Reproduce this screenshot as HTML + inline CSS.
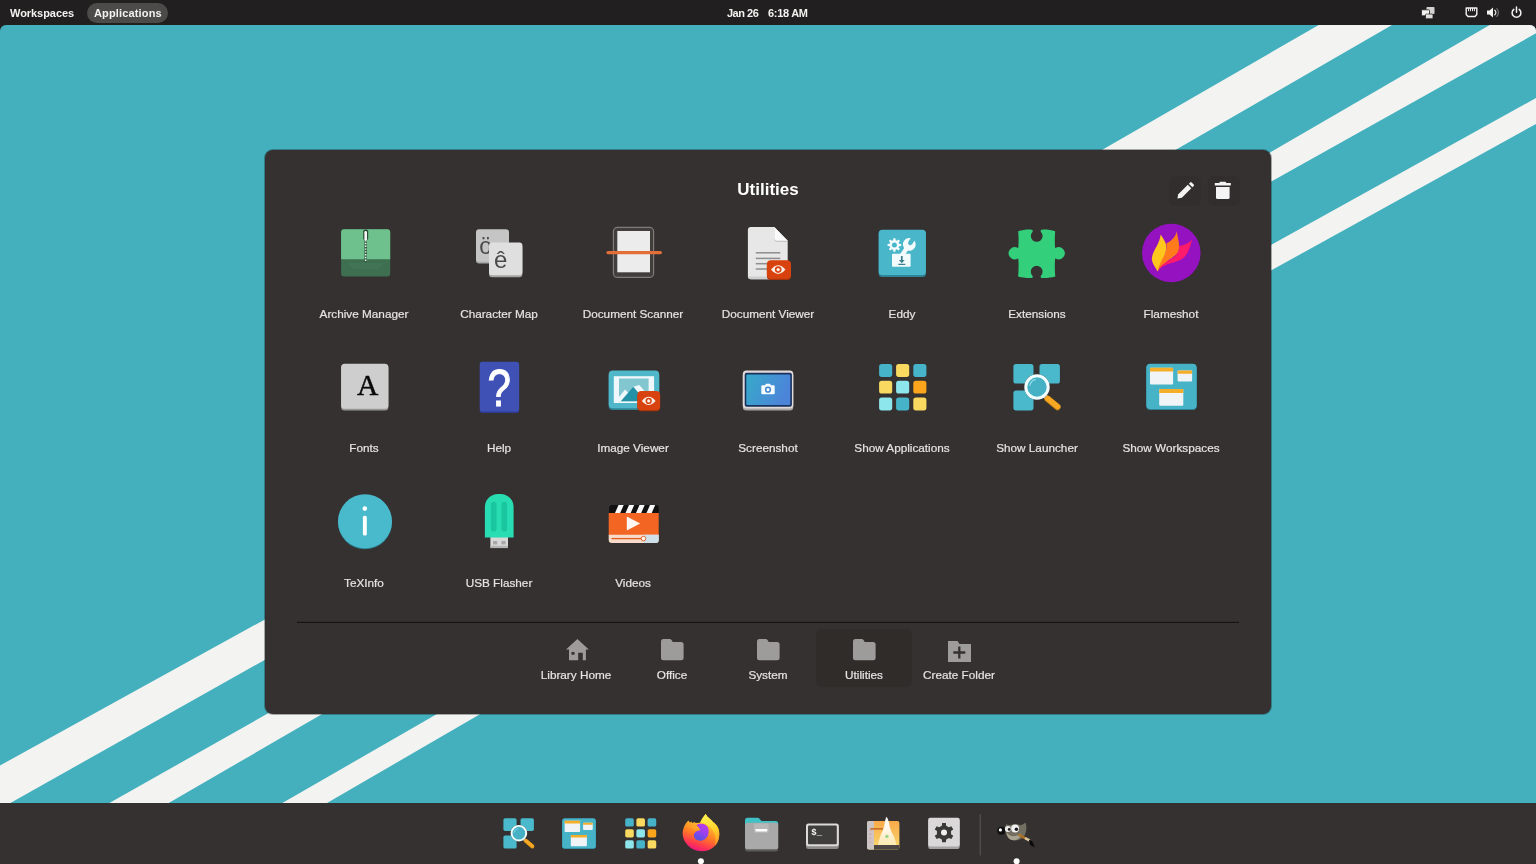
<!DOCTYPE html>
<html lang="en"><head><meta charset="utf-8"><title>Utilities</title>
<style>
*{margin:0;padding:0;box-sizing:border-box}
html,body{width:1536px;height:864px;overflow:hidden;background:#211f1f;font-family:"Liberation Sans",sans-serif}
svg{display:block;overflow:visible}
.lb,#title,#topbar span,.ic,svg.abs{will-change:transform}
#wall{position:absolute;left:0;top:25px;width:1536px;height:778px;border-radius:6px 6px 0 0;overflow:hidden;background:#44b0be}
#wall svg{position:absolute;left:0;top:-25px}
#topbar{position:absolute;left:0;top:0;width:1536px;height:25px;color:#f3f2f1;font-weight:bold;font-size:11px}
#topbar span{position:absolute;top:0;line-height:26px;white-space:nowrap}
#pill{position:absolute;left:87px;top:3px;width:81px;height:20px;border-radius:10px;background:#4d4b4a}
#topbar svg{position:absolute}
#win{position:absolute;left:265px;top:150px;width:1006px;height:564px;border-radius:8px;background:#353130;box-shadow:0 0 0 1px rgba(20,30,32,.35)}
#title{position:absolute;left:0;width:1006px;top:28px;text-align:center;color:#fff;font-weight:bold;font-size:17px;line-height:22px}
.ic{position:absolute;width:80px;height:80px}
.lb{position:absolute;width:180px;text-align:center;color:#e6e4e2;font-size:11.75px;line-height:16px;white-space:nowrap;-webkit-text-stroke:0.2px #e6e4e2}
#sep{position:absolute;left:297px;top:622px;width:942px;height:1px;background:#161412;box-shadow:0 -1px 0 rgba(0,0,0,.12)}
.tab{position:absolute;left:816px;top:629px;width:96px;height:58px;border-radius:5px;background:#2f2c2a}
.hb{position:absolute;top:176px;width:32px;height:30px;border-radius:6px;background:#312e2d}
#dock{position:absolute;left:0;top:803px;width:1536px;height:61px;background:#353130}
.dot{position:absolute;width:6px;height:6px;border-radius:50%;background:#fff}
.abs{position:absolute}
</style></head><body>
<div id="wall"><svg width="1536" height="864" viewBox="0 0 1536 864" fill="#f3f3f1">
<polygon points="-20,776.5 420,533.9 420,572.5 -20,820.1"/>
<polygon points="60,830.9 520,571.1 520,599.4 60,866"/>
<polygon points="240,827.4 640,597.1 640,621.4 240,853.5"/>
<polygon points="1000,208.8 1450,-50.7 1450,-8.5 1000,251.3"/>
<polygon points="1120,239.7 1560,-15.8 1560,19.9 1120,266.3"/>
<polygon points="1120,328.8 1560,84.7 1560,110.7 1120,354"/>
</svg></div>

<div id="topbar"><span style="left:9.5px;letter-spacing:-0.05px">Workspaces</span><div id="pill"></div><span style="left:93.7px;letter-spacing:0.15px">Applications</span><span style="left:727px;letter-spacing:-0.5px">Jan 26</span><span style="left:767.5px;letter-spacing:-0.3px">6:18 AM</span>
<svg style="left:1420px;top:6px" width="16" height="14" viewBox="0 0 16 14" fill="#f3f2f1"><rect x="6.5" y="1" width="8" height="7" rx="0.8" opacity=".85"/><rect x="1.5" y="3.8" width="8" height="6" rx="0.8" stroke="#211f1f" stroke-width="0.8"/><rect x="5.5" y="8" width="7.5" height="4.8" rx="0.8" stroke="#211f1f" stroke-width="0.8" opacity=".9"/></svg>
<svg style="left:1465px;top:7px" width="13" height="11" viewBox="0 0 13 11" fill="none" stroke="#f3f2f1"><path d="M1.2,1 H11.8 V7.5 L10,9.5 H3 L1.2,7.5z" stroke-width="1.4" stroke-linejoin="round"/><path d="M3.6,1v3.2M5.5,1v3.2M7.5,1v3.2M9.4,1v3.2" stroke-width="1"/></svg>
<svg style="left:1486px;top:7px" width="14" height="11" viewBox="0 0 14 11" fill="#f3f2f1"><path d="M1,3.6H3.5L7,0.6V10.4L3.5,7.4H1z"/><path d="M8.8,3.2a3,3 0 0 1 0,4.6" fill="none" stroke="#f3f2f1" stroke-width="1.2" stroke-linecap="round"/><path d="M10.8,1.6a5.5,5.5 0 0 1 0,7.8" fill="none" stroke="#f3f2f1" stroke-width="1.1" stroke-linecap="round" opacity=".45"/></svg>
<svg style="left:1510px;top:6px" width="13" height="13" viewBox="0 0 13 13" fill="none" stroke="#f3f2f1" stroke-width="1.5" stroke-linecap="round"><path d="M3.8,3.4a4.4,4.4 0 1 0 5.4,0"/><path d="M6.5,1v5.2"/></svg>
</div>
<div id="win"></div>
<div id="title" style="left:265px;top:179px">Utilities</div>
<div class="hb" style="left:1169px"></div><div class="hb" style="left:1208px"></div>
<svg class="abs" style="left:1176px;top:182px" width="20" height="18" viewBox="0 0 20 18" fill="#f4f4f4"><path d="M1.4,16.6 L2.3,12.2 L11.8,2.7 L15.3,6.2 L5.8,15.7z"/><path d="M12.9,1.7 L14.2,0.4 a1,1 0 0 1 1.4,0 L17.7,2.5 a1,1 0 0 1 0,1.4 L16.4,5.2z"/></svg>
<svg class="abs" style="left:1214px;top:181px" width="18" height="19" viewBox="0 0 18 19" fill="#f4f4f4"><path d="M6,0.8h5.5l0.8,1.3H16.8V4.6H0.8V2.1H5.2z"/><path d="M2,6H15.6V16.5a1.5,1.5 0 0 1 -1.5,1.5H3.5a1.5,1.5 0 0 1 -1.5,-1.5z"/></svg>
<svg class="ic" style="left:324px;top:213px" viewBox="0 0 80 80"><rect x="17.1" y="16.2" width="49.1" height="47.2" rx="3" fill="#3e6f51"/>
<path d="M17.1,46.3V19.2a3,3 0 0 1 3,-3H63.2a3,3 0 0 1 3,3V46.3z" fill="#6ec18c"/>
<path d="M24,50 H59.5 L54,56 H29.5z" fill="#457a59" opacity=".6"/>
<line x1="41.7" y1="17" x2="41.7" y2="49" stroke="#2f5a41" stroke-width="2.6"/>
<line x1="41.7" y1="27" x2="41.7" y2="49" stroke="#e8f4ec" stroke-width="1.6" stroke-dasharray="1.4 1.4"/>
<rect x="39.2" y="16.6" width="5" height="10.6" rx="2" fill="#2c4a39"/>
<rect x="40.4" y="18" width="2.6" height="9.5" rx="1.2" fill="#f6f6f6"/></svg>
<div class="lb" style="left:274.2px;top:305.7px">Archive Manager</div>
<svg class="ic" style="left:458px;top:213px" viewBox="0 0 80 80"><rect x="18" y="18" width="33" height="32.4" rx="3.2" fill="#a9a9a9"/>
<rect x="18" y="16.2" width="33" height="32.6" rx="3.2" fill="#c5c5c5"/>
<text x="27.6" y="40.7" font-family="Liberation Sans, sans-serif" font-size="23" text-anchor="middle" fill="#4a4a4a">ö</text>
<rect x="31" y="31.6" width="33.4" height="32.6" rx="3.2" fill="#a5a5a5"/>
<rect x="31" y="29.6" width="33.4" height="32.6" rx="3.2" fill="#dfdfdf"/>
<text x="42.6" y="54.6" font-family="Liberation Sans, sans-serif" font-size="24" text-anchor="middle" fill="#4a4a4a">ê</text></svg>
<div class="lb" style="left:408.7px;top:305.7px">Character Map</div>
<svg class="ic" style="left:593px;top:213px" viewBox="0 0 80 80"><rect x="20.4" y="14.4" width="40.2" height="50" rx="4" fill="#413e3c" stroke="#7f7b79" stroke-width="1.2"/>
<rect x="24.3" y="18" width="32.7" height="41.3" fill="#ececec"/>
<rect x="13.4" y="38" width="55.6" height="3.2" rx="1.6" fill="#e36f38"/></svg>
<div class="lb" style="left:543.2px;top:305.7px">Document Scanner</div>
<svg class="ic" style="left:728px;top:213px" viewBox="0 0 80 80"><path d="M22.9,13.9H46.3L59.7,27.8V63.2a3,3 0 0 1 -3,3H22.9a3,3 0 0 1 -3,-3V16.9a3,3 0 0 1 3,-3z" fill="#e7e7e7"/>
<path d="M19.9,63.5a3,3 0 0 0 3,2.7H56.7a3,3 0 0 0 3,-2.7z" fill="#cfcfcf"/>
<path d="M46.3,14.9V25.8a3,3 0 0 0 3,3H59.7z" fill="#bdbdbd"/>
<path d="M46.3,13.9V24.8a3,3 0 0 0 3,3H59.7z" fill="#fafafa"/>
<g stroke="#8e8e8e" stroke-width="1.5"><line x1="27.8" y1="39.8" x2="52.3" y2="39.8"/><line x1="27.8" y1="45.4" x2="52.3" y2="45.4"/><line x1="27.8" y1="50.7" x2="52.3" y2="50.7"/><line x1="27.8" y1="56" x2="52.3" y2="56"/></g>
<rect x="38.9" y="48.4" width="24.1" height="18.6" rx="4" fill="#a9340b"/>
<rect x="38.9" y="47.2" width="24.1" height="18.6" rx="4" fill="#d8420e"/><path d="M43,56.6 Q50.2,48 57.4,56.6 Q50.2,65.2 43,56.6 Z" fill="#fbeee6"/><circle cx="50.2" cy="56.6" r="3.3" fill="#d8420e"/><circle cx="50.2" cy="56.6" r="1.7" fill="#fbeee6"/></svg>
<div class="lb" style="left:677.7px;top:305.7px">Document Viewer</div>
<svg class="ic" style="left:862px;top:213px" viewBox="0 0 80 80"><rect x="16.7" y="18" width="47.2" height="46" rx="3.5" fill="#2f8497"/>
<rect x="16.7" y="16.7" width="47.2" height="45.3" rx="3.5" fill="#49b6ca"/><path d="M39.22,30.92 L39.22,33.08 L37.15,33.19 L36.6,34.52 L37.98,36.06 L36.46,37.58 L34.92,36.2 L33.59,36.75 L33.48,38.82 L31.32,38.82 L31.21,36.75 L29.88,36.2 L28.34,37.58 L26.82,36.06 L28.2,34.52 L27.65,33.19 L25.58,33.08 L25.58,30.92 L27.65,30.81 L28.2,29.48 L26.82,27.94 L28.34,26.42 L29.88,27.8 L31.21,27.25 L31.32,25.18 L33.48,25.18 L33.59,27.25 L34.92,27.8 L36.46,26.42 L37.98,27.94 L36.6,29.48 L37.15,30.81Z" fill="#f4fbfc"/><circle cx="32.4" cy="32" r="2.5" fill="#49b6ca"/>
<g transform="translate(47.3 31.4) rotate(34)"><circle r="6.4" fill="#f4fbfc"/><path d="M-2.3,-7.5h4.6v5.6a2.3,2.3 0 0 1 -4.6,0z" fill="#49b6ca"/><rect x="-2.2" y="4" width="4.4" height="9" fill="#f4fbfc"/></g>
<rect x="30" y="40.7" width="18.6" height="13" rx="1" fill="#f4fbfc"/>
<path d="M38.9,43v4h-2l2.9,3.2l2.9,-3.2h-2v-4z M36.3,50.8h7v1.2h-7z" fill="#3f7f8e"/></svg>
<div class="lb" style="left:812.2px;top:305.7px">Eddy</div>
<svg class="ic" style="left:996px;top:213px" viewBox="0 0 80 80"><path d="M22.2,18.2 C26.5,16.9 31.5,16.4 35.6,16.7 C36.9,16.9 37.1,17.9 36.4,18.9 A5.9,5.9 0 1 0 45,18.9 C44.3,17.9 44.5,16.9 45.8,16.7 C50,16.4 55,16.9 59.2,18.2 C58.7,23.5 58.7,29 59,33.5 C59.1,35 59.6,35.6 59.4,35.1 A6.1,6.1 0 1 1 59.4,45.5 C59.6,45 59.1,45.6 59,47.1 C58.7,51.6 58.7,58 59.3,63.5 C55,64.7 50,65.2 45.8,64.9 C44.5,64.7 44.3,63.7 45,62.7 A5.9,5.9 0 1 0 36.4,62.7 C37.1,63.7 36.9,64.7 35.6,64.9 C31.5,65.2 26.5,64.7 22.1,63.5 C22.7,58 22.7,51.6 22.4,47.1 C22.3,45.6 21.8,45 22,45.5 A6.1,6.1 0 1 1 22,35.1 C21.8,35.6 22.3,35 22.4,33.5 C22.7,29 22.7,23.5 22.2,18.2z" fill="#34cf7b"/></svg>
<div class="lb" style="left:946.7px;top:305.7px">Extensions</div>
<svg class="ic" style="left:1131px;top:213px" viewBox="0 0 80 80"><circle cx="40.3" cy="40" r="29.3" fill="#9412bf"/>
<g transform="translate(40.5 39.5) scale(1.09) translate(-40.5 -39.5)">
<path d="M59.3,27.8C58,33 56.5,39 52.5,43.5C46.5,50 34,48 27.8,57C30,50.5 36,47.5 41,45C45,42.5 47.5,38.5 47.5,33.5C52,33 56.5,31 59.3,27.8z" fill="#ff1b6b"/>
<path d="M45.4,19.9C46,26 48.5,31 47,37.5C45,45 32,47 27.8,57C28.5,50 30,46.5 33.5,42C35.5,39 36.5,35 35.8,31C40,29 44,25.5 45.4,19.9z" fill="#ff7b1c"/>
<path d="M30.5,23.1C33,27 36.5,31 35.6,37C34.5,43 30,47 27.8,57C25,52 21.5,48 22.7,43.5C24,37 30,31 30.5,23.1z" fill="#ffc61e"/></g></svg>
<div class="lb" style="left:1081.2px;top:305.7px">Flameshot</div>
<svg class="ic" style="left:324px;top:347px" viewBox="0 0 80 80"><rect x="17.1" y="18" width="47.3" height="45.5" rx="3.5" fill="#9a9897"/>
<rect x="17.1" y="16.7" width="47.3" height="45" rx="3.5" fill="#cecece"/>
<text x="43.6" y="47.7" font-family="Liberation Serif, serif" font-size="29.5" text-anchor="middle" fill="#0a0a0a" stroke="#0a0a0a" stroke-width="0.5">A</text></svg>
<div class="lb" style="left:274.2px;top:440.2px">Fonts</div>
<svg class="ic" style="left:458px;top:347px" viewBox="0 0 80 80"><rect x="21.8" y="16" width="39.3" height="49.9" rx="2.5" fill="#2e3c96"/>
<rect x="21.8" y="14.8" width="39.3" height="49.8" rx="2.5" fill="#3f51b5"/>
<text transform="translate(41.3 59.3) scale(0.8 1)" x="0" y="0" font-family="Liberation Sans, sans-serif" font-size="52.5" text-anchor="middle" fill="#ffffff" stroke="#ffffff" stroke-width="1">?</text></svg>
<div class="lb" style="left:408.7px;top:440.2px">Help</div>
<svg class="ic" style="left:593px;top:347px" viewBox="0 0 80 80"><rect x="15.7" y="25" width="50.5" height="38" rx="4" fill="#2f8497"/>
<rect x="15.7" y="23.6" width="50.5" height="37.6" rx="4" fill="#50b6ca"/>
<rect x="20.8" y="29.2" width="40.3" height="26.8" fill="#eef7fb"/>
<rect x="26" y="31.5" width="29.6" height="22.7" fill="#82c7d0"/>
<path d="M26,50 L32,42.5 L36,46.5 L40.3,39.8 L46.3,38 L55.6,48.5 V54.2 H26z" fill="#eef7fb"/>
<path d="M27.8,54.2 L40.3,39.8 L52.5,54.2z" fill="#2392a6"/>
<rect x="44.4" y="45.2" width="22.7" height="19" rx="4" fill="#a9340b"/>
<rect x="44.4" y="44" width="22.7" height="19" rx="4" fill="#d8420e"/><path d="M48.86,53.9 Q55.7,45.73 62.54,53.9 Q55.7,62.07 48.86,53.9 Z" fill="#fbeee6"/><circle cx="55.7" cy="53.9" r="3.13" fill="#d8420e"/><circle cx="55.7" cy="53.9" r="1.61" fill="#fbeee6"/></svg>
<div class="lb" style="left:543.2px;top:440.2px">Image Viewer</div>
<svg class="ic" style="left:728px;top:347px" viewBox="0 0 80 80"><defs><linearGradient id="sg" x1="0" y1="0" x2="1" y2="0.3"><stop offset="0" stop-color="#36aac9"/><stop offset="1" stop-color="#4c84d9"/></linearGradient></defs>
<rect x="14.8" y="25" width="50.5" height="38.6" rx="3.5" fill="#a9a2a2"/>
<rect x="14.8" y="23.6" width="50.5" height="37.8" rx="3.5" fill="#e0dada"/>
<rect x="16.7" y="25.8" width="47.2" height="33.9" rx="2" fill="#18305c"/>
<rect x="18.3" y="27.5" width="44" height="30.5" rx="1" fill="url(#sg)"/>
<path d="M34.3,38.3H37l1,-1.6h4l1,1.6h2.7a1,1 0 0 1 1,1v7a1,1 0 0 1 -1,1H34.3a1,1 0 0 1 -1,-1v-7a1,1 0 0 1 1,-1z" fill="#f6fbfe"/>
<circle cx="40" cy="42.7" r="3.1" fill="#3f86cf"/><circle cx="40" cy="42.7" r="1.6" fill="#f6fbfe"/></svg>
<div class="lb" style="left:677.7px;top:440.2px">Screenshot</div>
<svg class="ic" style="left:862px;top:347px" viewBox="0 0 80 80"><rect x="17.1" y="17.1" width="13.1" height="12.8" rx="2.6" fill="#46b3c9"/><rect x="34.1" y="17.1" width="13.1" height="12.8" rx="2.6" fill="#f9d95f"/><rect x="51.3" y="17.1" width="13.1" height="12.8" rx="2.6" fill="#46b3c9"/><rect x="17.1" y="33.8" width="13.1" height="12.8" rx="2.6" fill="#f9d95f"/><rect x="34.1" y="33.8" width="13.1" height="12.8" rx="2.6" fill="#8ce6eb"/><rect x="51.3" y="33.8" width="13.1" height="12.8" rx="2.6" fill="#faa51b"/><rect x="17.1" y="50.6" width="13.1" height="12.8" rx="2.6" fill="#8ce6eb"/><rect x="34.1" y="50.6" width="13.1" height="12.8" rx="2.6" fill="#46b3c9"/><rect x="51.3" y="50.6" width="13.1" height="12.8" rx="2.6" fill="#f9d95f"/></svg>
<div class="lb" style="left:812.2px;top:440.2px">Show Applications</div>
<svg class="ic" style="left:996px;top:347px" viewBox="0 0 80 80"><rect x="17.4" y="17.1" width="20.1" height="19.5" rx="2.6" fill="#49b9cb"/>
<rect x="43.5" y="17.1" width="20.4" height="19.5" rx="2.6" fill="#49b9cb"/>
<rect x="17.4" y="43.5" width="20.1" height="19.9" rx="2.6" fill="#49b9cb"/>
<line x1="48.5" y1="48.8" x2="53" y2="52.8" stroke="#eefafa" stroke-width="4"/>
<line x1="51.6" y1="51.8" x2="61.5" y2="60" stroke="#c98514" stroke-width="6.4" stroke-linecap="round"/>
<line x1="51.6" y1="51.4" x2="61.5" y2="59.6" stroke="#f6a824" stroke-width="5.2" stroke-linecap="round"/>
<circle cx="41" cy="40" r="12.7" fill="#353130"/>
<circle cx="41" cy="40" r="11.2" fill="#46b1c5" stroke="#f2fdfd" stroke-width="3"/>
<path d="M33.8,38.5a7.5,7.5 0 0 1 5.5,-5.8" fill="none" stroke="#8fdde6" stroke-width="1.2" stroke-linecap="round"/></svg>
<div class="lb" style="left:946.7px;top:440.2px">Show Launcher</div>
<svg class="ic" style="left:1131px;top:347px" viewBox="0 0 80 80"><rect x="15.3" y="18" width="50.4" height="45" rx="4" fill="#2f8497"/>
<rect x="15.3" y="16.7" width="50.4" height="45.3" rx="4" fill="#46b3c7"/>
<rect x="19" y="20.8" width="23.1" height="16.7" rx="1" fill="#f0f4f6"/><path d="M19,24.6v-2.8a1,1 0 0 1 1,-1h21.1a1,1 0 0 1 1,1v2.8z" fill="#f5ae2a"/>
<rect x="46.6" y="23.6" width="14.5" height="10.8" rx="1" fill="#f0f4f6"/><path d="M46.6,26.7v-2.1a1,1 0 0 1 1,-1h12.5a1,1 0 0 1 1,1v2.1z" fill="#f5ae2a"/>
<rect x="28.2" y="42.1" width="24.1" height="16.7" rx="1" fill="#f0f4f6"/><path d="M28.2,45.9v-2.8a1,1 0 0 1 1,-1h22.1a1,1 0 0 1 1,1v2.8z" fill="#f5ae2a"/></svg>
<div class="lb" style="left:1081.2px;top:440.2px">Show Workspaces</div>
<svg class="ic" style="left:324px;top:481px" viewBox="0 0 80 80"><circle cx="41" cy="41.3" r="27" fill="#2f8497"/>
<circle cx="41" cy="40.3" r="27" fill="#49b9cc"/>
<circle cx="40.8" cy="27.6" r="2.3" fill="#ffffff"/>
<rect x="38.9" y="34.7" width="3.9" height="19.9" rx="1.6" fill="#ffffff"/></svg>
<div class="lb" style="left:274.2px;top:574.7px">TeXInfo</div>
<svg class="ic" style="left:458px;top:481px" viewBox="0 0 80 80"><rect x="32.4" y="54" width="17.6" height="13.1" rx="1" fill="#d8d8d8"/>
<rect x="32.4" y="64.8" width="17.6" height="2.3" fill="#b5b5b5"/>
<rect x="35" y="60" width="4.2" height="3.4" fill="#a8a8a8"/><rect x="43.4" y="60" width="4.2" height="3.4" fill="#a8a8a8"/>
<path d="M26.9,56.5V26a13,13 0 0 1 13,-13h2.7a13,13 0 0 1 13,13V56.5z" fill="#28ddb1"/>
<rect x="32.9" y="20.8" width="5.6" height="29.7" rx="2.8" fill="#19c6a0"/>
<rect x="43.5" y="20.8" width="5.6" height="29.7" rx="2.8" fill="#19c6a0"/></svg>
<div class="lb" style="left:408.7px;top:574.7px">USB Flasher</div>
<svg class="ic" style="left:593px;top:481px" viewBox="0 0 80 80"><path d="M16.2,32V27a3,3 0 0 1 3,-3H62.7a3,3 0 0 1 3,3V32z" fill="#111111"/><path d="M22,32 L25.5,24 h5.2 L27.2,32z" fill="#fafafa"/><path d="M32.5,32 L36,24 h5.2 L37.7,32z" fill="#fafafa"/><path d="M43,32 L46.5,24 h5.2 L48.2,32z" fill="#fafafa"/><path d="M53.5,32 L57,24 h5.2 L58.7,32z" fill="#fafafa"/><rect x="15.7" y="32" width="50" height="22" fill="#f26522"/>
<path d="M15.7,53.7H65.7V59a3,3 0 0 1 -3,3H18.7a3,3 0 0 1 -3,-3z" fill="#f8dccb"/>
<path d="M50.5,53.7H65.7V59a3,3 0 0 1 -3,3H50.5z" fill="#cfe0ea"/>
<path d="M15.7,60.5V59.5H65.7V60.5a3,3 0 0 1 -3,3H18.7a3,3 0 0 1 -3,-3z" fill="#b84d1a" opacity="0"/>
<line x1="18.5" y1="57.6" x2="50" y2="57.6" stroke="#e25a1c" stroke-width="1.3"/>
<circle cx="50.5" cy="57.6" r="2.3" fill="#fdf3ec" stroke="#e25a1c" stroke-width="0.9"/>
<path d="M33.8,35.6V49.5L47.2,42.5z" fill="#fdf7f3"/></svg>
<div class="lb" style="left:543.2px;top:574.7px">Videos</div>
<div id="sep"></div><div class="tab"></div>
<svg class="abs" style="left:565.5px;top:639px" width="23" height="22" viewBox="0 0 23 22"><path d="M11.4,0 L22.8,10.6 H19.9 V21.3 H16.8 V13.8 H12.2 V21.3 H3 V10.6 H0z M5.5,13h3v2.7h-3z" fill="#9e9c9b" fill-rule="evenodd"/></svg>
<svg class="abs" style="left:660.5px;top:639px" width="23" height="22" viewBox="0 0 23 22"><path d="M0,2.5a2.5,2.5 0 0 1 2.5,-2.5H8.5a2.5,2.5 0 0 1 2.2,1.3L11.7,3H20.1a2.5,2.5 0 0 1 2.5,2.5V18.8a2.5,2.5 0 0 1 -2.5,2.5H2.5a2.5,2.5 0 0 1 -2.5,-2.5z" fill="#9e9c9b"/></svg>
<svg class="abs" style="left:756.5px;top:639px" width="23" height="22" viewBox="0 0 23 22"><path d="M0,2.5a2.5,2.5 0 0 1 2.5,-2.5H8.5a2.5,2.5 0 0 1 2.2,1.3L11.7,3H20.1a2.5,2.5 0 0 1 2.5,2.5V18.8a2.5,2.5 0 0 1 -2.5,2.5H2.5a2.5,2.5 0 0 1 -2.5,-2.5z" fill="#9e9c9b"/></svg>
<svg class="abs" style="left:852.8px;top:639px" width="23" height="22" viewBox="0 0 23 22"><path d="M0,2.5a2.5,2.5 0 0 1 2.5,-2.5H8.5a2.5,2.5 0 0 1 2.2,1.3L11.7,3H20.1a2.5,2.5 0 0 1 2.5,2.5V18.8a2.5,2.5 0 0 1 -2.5,2.5H2.5a2.5,2.5 0 0 1 -2.5,-2.5z" fill="#9e9c9b"/></svg>
<svg class="abs" style="left:948.4px;top:641px" width="23" height="21" viewBox="0 0 23 21"><path d="M0,0H9.5L11.5,3H23V20.9H0z" fill="#9e9c9b"/><path d="M11.3,5.5v12M5.3,11.5h12" stroke="#353130" stroke-width="2.3"/></svg>
<div class="lb" style="left:485.7px;top:667.2px">Library Home</div>
<div class="lb" style="left:581.8px;top:667.2px">Office</div>
<div class="lb" style="left:678px;top:667.2px">System</div>
<div class="lb" style="left:773.7px;top:667.2px">Utilities</div>
<div class="lb" style="left:869.4px;top:667.2px">Create Folder</div>
<div id="dock"></div>
<svg class="abs" style="left:491.5px;top:807.3px" width="52.48" height="52.48" viewBox="0 0 80 80"><rect x="17.4" y="17.1" width="20.1" height="19.5" rx="2.6" fill="#49b9cb"/>
<rect x="43.5" y="17.1" width="20.4" height="19.5" rx="2.6" fill="#49b9cb"/>
<rect x="17.4" y="43.5" width="20.1" height="19.9" rx="2.6" fill="#49b9cb"/>
<line x1="48.5" y1="48.8" x2="53" y2="52.8" stroke="#eefafa" stroke-width="4"/>
<line x1="51.6" y1="51.8" x2="61.5" y2="60" stroke="#c98514" stroke-width="6.4" stroke-linecap="round"/>
<line x1="51.6" y1="51.4" x2="61.5" y2="59.6" stroke="#f6a824" stroke-width="5.2" stroke-linecap="round"/>
<circle cx="41" cy="40" r="12.7" fill="#353130"/>
<circle cx="41" cy="40" r="11.2" fill="#46b1c5" stroke="#f2fdfd" stroke-width="3"/>
<path d="M33.8,38.5a7.5,7.5 0 0 1 5.5,-5.8" fill="none" stroke="#8fdde6" stroke-width="1.2" stroke-linecap="round"/></svg>
<svg class="abs" style="left:552.087px;top:806.754px" width="53.36" height="53.36" viewBox="0 0 80 80"><rect x="15.3" y="18" width="50.4" height="45" rx="4" fill="#2f8497"/>
<rect x="15.3" y="16.7" width="50.4" height="45.3" rx="4" fill="#46b3c7"/>
<rect x="19" y="20.8" width="23.1" height="16.7" rx="1" fill="#f0f4f6"/><path d="M19,24.6v-2.8a1,1 0 0 1 1,-1h21.1a1,1 0 0 1 1,1v2.8z" fill="#f5ae2a"/>
<rect x="46.6" y="23.6" width="14.5" height="10.8" rx="1" fill="#f0f4f6"/><path d="M46.6,26.7v-2.1a1,1 0 0 1 1,-1h12.5a1,1 0 0 1 1,1v2.1z" fill="#f5ae2a"/>
<rect x="28.2" y="42.1" width="24.1" height="16.7" rx="1" fill="#f0f4f6"/><path d="M28.2,45.9v-2.8a1,1 0 0 1 1,-1h22.1a1,1 0 0 1 1,1v2.8z" fill="#f5ae2a"/></svg>
<svg class="abs" style="left:613.568px;top:807.096px" width="52.48" height="52.48" viewBox="0 0 80 80"><rect x="17.1" y="17.1" width="13.1" height="12.8" rx="2.6" fill="#46b3c9"/><rect x="34.1" y="17.1" width="13.1" height="12.8" rx="2.6" fill="#f9d95f"/><rect x="51.3" y="17.1" width="13.1" height="12.8" rx="2.6" fill="#46b3c9"/><rect x="17.1" y="33.8" width="13.1" height="12.8" rx="2.6" fill="#f9d95f"/><rect x="34.1" y="33.8" width="13.1" height="12.8" rx="2.6" fill="#8ce6eb"/><rect x="51.3" y="33.8" width="13.1" height="12.8" rx="2.6" fill="#faa51b"/><rect x="17.1" y="50.6" width="13.1" height="12.8" rx="2.6" fill="#8ce6eb"/><rect x="34.1" y="50.6" width="13.1" height="12.8" rx="2.6" fill="#46b3c9"/><rect x="51.3" y="50.6" width="13.1" height="12.8" rx="2.6" fill="#f9d95f"/></svg>
<svg class="abs" style="left:0;top:803px" width="1536" height="61" viewBox="0 803 1536 61">
<defs>
<linearGradient id="ffo" gradientUnits="userSpaceOnUse" x1="708" y1="816" x2="695" y2="852"><stop offset="0" stop-color="#ffe53a"/><stop offset="0.3" stop-color="#ffb02a"/><stop offset="0.55" stop-color="#ff7a25"/><stop offset="0.8" stop-color="#ff3750"/><stop offset="1" stop-color="#e8108a"/></linearGradient>
<linearGradient id="ffy" gradientUnits="userSpaceOnUse" x1="705" y1="815" x2="716" y2="846"><stop offset="0" stop-color="#fff250"/><stop offset="0.5" stop-color="#ffd22e"/><stop offset="1" stop-color="#ff9020"/></linearGradient>
<linearGradient id="ffp" gradientUnits="userSpaceOnUse" x1="705" y1="825" x2="697" y2="840"><stop offset="0" stop-color="#b93ce8"/><stop offset="0.45" stop-color="#9a40f0"/><stop offset="1" stop-color="#4f55df"/></linearGradient>
<linearGradient id="ins" x1="0" y1="0" x2="0" y2="1"><stop offset="0" stop-color="#fbaa4a"/><stop offset="1" stop-color="#f7d86e"/></linearGradient>
<linearGradient id="rk" x1="0" y1="0" x2="0" y2="1"><stop offset="0" stop-color="#ffffff"/><stop offset="0.45" stop-color="#fffaf0" stop-opacity="0.95"/><stop offset="1" stop-color="#fff6d0" stop-opacity="0.7"/></linearGradient>
</defs>
<!-- firefox -->
<path d="M688.4,820.4 L690,822.8 L691.3,821.4 L692.7,823.3 L694,822 C695,822.8 696.5,823.2 697.5,823 C698.5,822.9 699.5,822.8 700.3,822.5 C701.5,819.5 703.5,816.5 705.8,814.1 C706.5,816 707.8,817.2 709.2,818.3 C710.8,819.5 712.3,821 713.2,822.6 C713.7,822.4 714.2,822.6 714.6,823.2 C717,825.3 718.8,828.2 719.1,831.5 C719.5,835 719.2,838.5 717.5,842 C715.5,846.3 711.5,849.5 706.5,850.7 C701.5,851.8 695.5,851 691,848 C686.5,845 683.2,840 682.7,834.5 C682.4,829.5 684.5,824 688.4,820.4z" fill="url(#ffo)"/>
<path d="M700.3,822.5 C701.5,819.5 703.5,816.5 705.8,814.1 C706.5,816 707.8,817.2 709.2,818.3 C710.8,819.5 712.3,821 713.2,822.6 C713.7,822.4 714.2,822.6 714.6,823.2 C717,825.3 718.8,828.2 719.1,831.5 C719.5,835 719.2,838.5 717.5,842 C716.8,843.5 715.8,844.8 714.8,846 C716.2,841 715.8,835 713,830.5 C710.5,826.5 705.5,823.5 700.3,822.5z" fill="url(#ffy)"/>
<path d="M696.3,825.2 C699,823.5 703,823.4 705.5,824.8 C708,826.3 709,829.5 708.6,832.8 C708.2,836.5 706,839.5 702.5,840.5 C699.5,841.3 696,840.2 694.5,837.8 C693.3,835.8 693.8,833.2 695.8,831.8 C697,830.9 698.7,830.5 700.3,830.3 C699.5,828.3 698,826.5 696.3,825.2z" fill="url(#ffp)"/>
<path d="M700.3,830.3 C699.5,828.3 698,826.5 696.3,825.2 C694,825 691.5,825.8 689.5,827.3 C691.5,827.3 693.5,828.3 694.8,829.8 C696.5,829.6 698.8,829.7 700.3,830.3z" fill="#ffa62a" opacity=".9"/>
<circle cx="700.9" cy="861.3" r="3" fill="#ffffff"/>
<!-- files -->
<path d="M745,822.5V820.2a2.5,2.5 0 0 1 2.5,-2.5H757.5a2.5,2.5 0 0 1 2,1L761.5,821H775.7a2.5,2.5 0 0 1 2.5,2.5V826H745z" fill="#3fc1c6"/>
<rect x="745" y="824" width="33.2" height="27.5" rx="2.5" fill="#5e5c5b"/>
<rect x="745" y="822.7" width="33.2" height="26.6" rx="2.5" fill="#aaa9a9"/>
<rect x="754" y="823.5" width="14.5" height="9.3" rx="1" fill="#b9b8b8"/>
<rect x="755.5" y="829" width="11.8" height="2.4" rx="0.6" fill="#ffffff"/>
<!-- terminal -->
<rect x="806" y="824.5" width="32.8" height="24.5" rx="2.5" fill="#8d8b89"/>
<rect x="806" y="823.5" width="32.8" height="22.8" rx="2.5" fill="#dcdad8"/>
<rect x="808" y="825.5" width="28.8" height="18.8" rx="1" fill="#403e3d"/>
<text x="811.3" y="834.6" font-family="Liberation Mono, monospace" font-weight="bold" font-size="9" fill="#f4f4f4">$_</text>
<!-- installer -->
<rect x="867" y="821" width="32.4" height="28.4" rx="2" fill="url(#ins)"/>
<path d="M873.9,845H899.4V847.4a2,2 0 0 1 -2,2H873.9z" fill="#4b4644"/>
<path d="M867,823a2,2 0 0 1 2,-2H873.9V849.4H869a2,2 0 0 1 -2,-2z" fill="#cbc5c7"/>
<g fill="#d9a0a8"><rect x="869.6" y="829.5" width="1.6" height="1.6"/><rect x="869.6" y="833.5" width="1.6" height="1.6"/><rect x="869.6" y="837.5" width="1.6" height="1.6"/><rect x="869.6" y="841.5" width="1.6" height="1.6"/></g>
<rect x="870.4" y="828" width="12.5" height="1.7" fill="#c9702a"/>
<path d="M886.5,816.7 C888.2,819 889,822 889.5,825.4 C890.3,829.5 891.5,832 892.7,834 C894.5,837.5 895.8,840.5 896.4,845 L878,845 C878.6,840.5 879.8,837.5 881.1,834 C882.2,832 883.5,829.5 884.3,825.4 C884.8,822 885.3,819 886.5,816.7z" fill="url(#rk)"/>
<circle cx="886.9" cy="836.4" r="1.7" fill="#9ad58c"/>
<!-- settings -->
<rect x="928.2" y="819" width="31.5" height="29.9" rx="2" fill="#a5a3a3"/>
<rect x="928.2" y="817.7" width="31.5" height="28.8" rx="2" fill="#dad8d8"/>
<path d="M942.12,822.98 L945.88,822.98 L946.14,825.72 L948.89,827.31 L951.39,826.17 L953.27,829.42 L951.02,831.01 L951.02,834.19 L953.27,835.78 L951.39,839.03 L948.89,837.89 L946.14,839.48 L945.88,842.22 L942.12,842.22 L941.86,839.48 L939.11,837.89 L936.61,839.03 L934.73,835.78 L936.98,834.19 L936.98,831.01 L934.73,829.42 L936.61,826.17 L939.11,827.31 L941.86,825.72Z" fill="#3b3938"/><circle cx="944" cy="832.6" r="3" fill="#f0eeee"/>
<!-- separator -->
<rect x="979.7" y="814" width="1" height="41.5" fill="#5c5856"/>
<!-- gimp -->
<path d="M1005.6,831 C1005.2,827.5 1005.5,825.5 1006.2,824.3 C1007.5,825 1009,825.3 1010.5,825 C1013.5,823.8 1018,824 1020.5,825.2 C1022.5,824.5 1024.5,823.3 1025.6,822.4 C1026.8,825.5 1026.8,830.5 1025,834.5 C1023,839 1018,841 1013.5,840.3 C1009,839.6 1006,836.3 1005.6,831z" fill="#726e62"/>
<path d="M1006.5,832.5 C1008.5,835.5 1012.5,837 1016.5,835.8 C1018.5,835.2 1020,834.3 1021,833.2 C1021.5,836.5 1018.5,839.8 1014,840.2 C1010,840.5 1007,837.5 1006.5,832.5z" fill="#a9a491"/>
<circle cx="1001.3" cy="830.8" r="4" fill="#0e0e0e"/><circle cx="1000.4" cy="829.9" r="1.6" fill="#ffffff"/>
<circle cx="1007.9" cy="829.1" r="3" fill="#ececec"/><circle cx="1009.2" cy="829.4" r="1.4" fill="#1a1a1a"/>
<circle cx="1015.1" cy="828.5" r="3.9" fill="#f2f2f2"/><circle cx="1016.4" cy="829.2" r="1.7" fill="#1a1a1a"/>
<line x1="1019.2" y1="835" x2="1026" y2="838.6" stroke="#b0701f" stroke-width="2.4" stroke-linecap="round"/>
<line x1="1026" y1="838.6" x2="1029" y2="840.2" stroke="#d8c8a0" stroke-width="2.6" stroke-linecap="round"/>
<path d="M1028.8,839.6 L1032.2,841.2 L1035,847.5 L1030.2,845 z" fill="#0a0a0a"/>
<circle cx="1016.6" cy="861.3" r="3" fill="#ffffff"/>
</svg>

</body></html>
